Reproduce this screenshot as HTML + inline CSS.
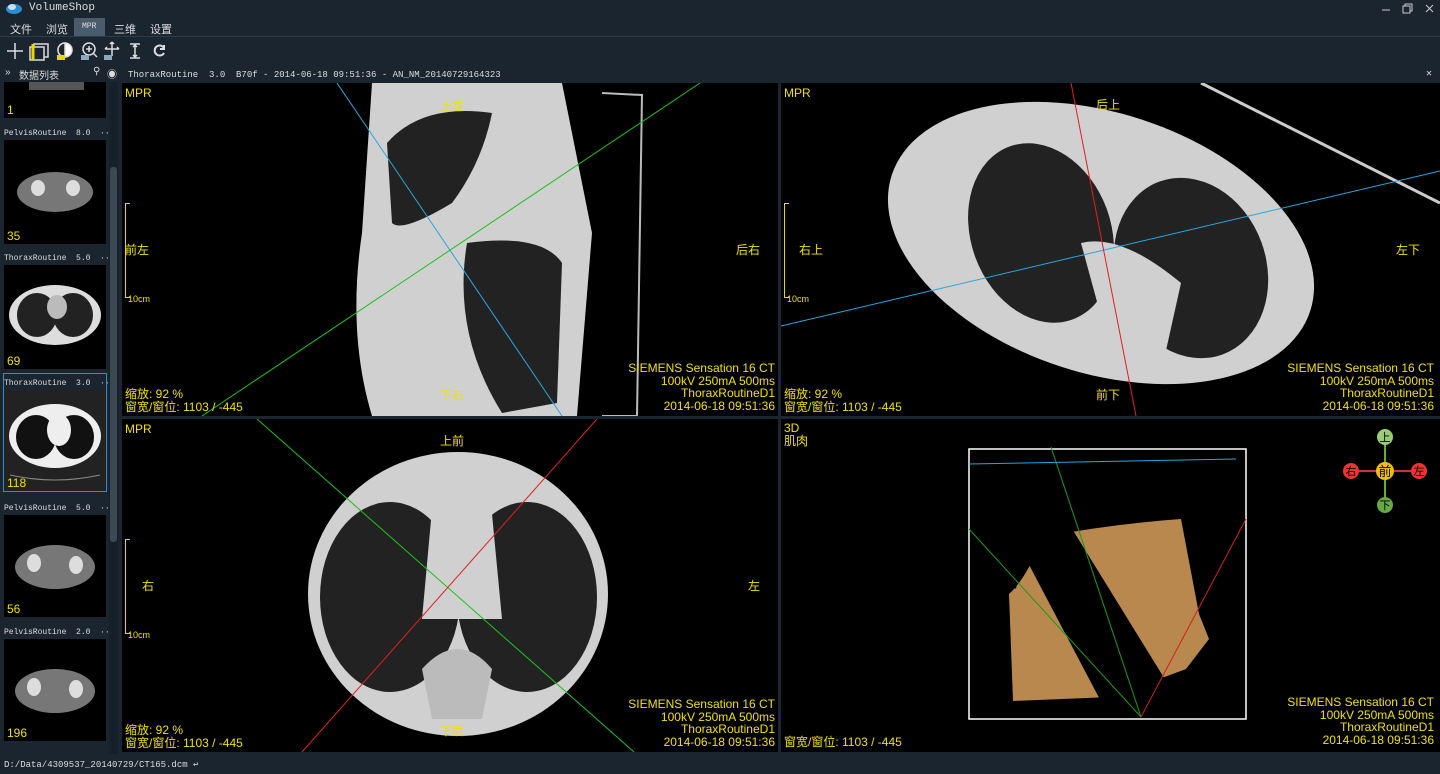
<!DOCTYPE html>
<html><head><meta charset="utf-8">
<style>
*{margin:0;padding:0;box-sizing:border-box}
body{width:1440px;height:774px;background:#1b2530;overflow:hidden;font-family:"Liberation Mono","Noto Sans CJK SC",monospace;color:#ddd;position:relative}
.abs{position:absolute}
.cn{font-family:"Liberation Sans","Noto Sans CJK SC",sans-serif}
.vp{position:absolute;background:#000;overflow:hidden}
.y{color:#f0e000;font-family:"Liberation Sans","Noto Sans CJK SC",sans-serif;font-size:12px;position:absolute;line-height:12.7px;white-space:nowrap}
.thumbh{position:absolute;left:4px;font-size:8px;color:#ddd;white-space:pre}
.th{position:absolute;left:4px;width:102px;background:#000}
.num{position:absolute;left:3px;bottom:1px;color:#f0e000;font-family:"Liberation Sans",sans-serif;font-size:12px}
</style></head><body>
<svg class="abs" style="left:4px;top:2px" width="20" height="13"><ellipse cx="10" cy="7" rx="8" ry="5" fill="#2a8fd0"/><ellipse cx="8" cy="5" rx="4" ry="3" fill="#cde"/></svg>
<div class="abs" style="left:29px;top:2px;font-size:11px;color:#ddd">VolumeShop</div>
<svg class="abs" style="left:1375px;top:2px" width="60" height="14" stroke="#ccc" fill="none"><path d="M7 8h8"/><rect x="28" y="4" width="7" height="7"/><path d="M30 4V2h7v7h-2"/><path d="M51 3l7 7M58 3l-7 7"/></svg>
<div class="abs cn" style="left:0;top:18px;width:1440px;height:18px;font-size:11px;color:#ddd">
<span class="abs" style="left:10px;top:3px">文件</span>
<span class="abs" style="left:46px;top:3px">浏览</span>
<span class="abs" style="left:74px;top:0;width:31px;height:18px;background:#4a5c6c"></span>
<span class="abs" style="left:82px;top:4px;font-size:8px;font-family:'Liberation Mono'">MPR</span>
<span class="abs" style="left:114px;top:3px">三维</span>
<span class="abs" style="left:150px;top:3px">设置</span>
</div>
<div class="abs" style="left:0;top:36px;width:1440px;height:1px;background:#2e3d4b"></div>
<svg class="abs" style="left:4px;top:40px" width="170" height="22" fill="none" stroke="#ddd" stroke-width="1.5">
<path d="M3 11H19M11 3V19"/>
<rect x="30" y="4" width="14" height="13" fill="#1b2530"/><rect x="26" y="7" width="14" height="13" fill="#1b2530"/><path d="M29 4v16" stroke="#e8d800" stroke-width="3"/>
<circle cx="61" cy="10" r="7" fill="#fff"/><path d="M61 3a7 7 0 0 0 0 14z" fill="#1b2530"/><rect x="53" y="15" width="8" height="5" fill="#e8d800" stroke="none"/>
<circle cx="85" cy="9" r="6"/><path d="M85 6v6M82 9h6M89 13l4 4"/><rect x="77" y="15" width="8" height="5" fill="#8ab" stroke="none"/>
<path d="M108 2v14M101 9h14M108 2l-2 2M108 2l2 2M101 9l2-2M115 9l-2-2"/><rect x="100" y="15" width="8" height="5" fill="#8ab" stroke="none"/>
<path d="M126 4h10M126 18h10M131 5v12M129 7l2-2 2 2M129 15l2 2 2-2"/>
<path d="M160 8a5 5 0 1 0 0 5M160 5v4h-4" stroke-width="2"/>
</svg>
<div class="abs cn" style="left:0;top:66px;width:120px;height:16px;font-size:10px;color:#ddd"><span class="abs" style="left:5px;top:1px">»</span><span class="abs" style="left:19px;top:1px">数据列表</span><span class="abs" style="left:93px;top:0">⚲</span><span class="abs" style="left:107px;top:0">◉</span></div>
<div class="abs" style="left:128px;top:70px;font-size:9px;color:#ddd;white-space:pre">ThoraxRoutine  3.0  B70f - 2014-06-18 09:51:36 - AN_NM_20140729164323</div>
<div class="abs" style="left:1426px;top:68px;font-size:10px;color:#ddd">✕</div>
<div class="abs" style="left:0;top:82px;width:120px;height:672px;background:#1b2530;overflow:hidden">
 <div class="th" style="top:0;height:36px"><div class="abs" style="left:25px;top:0;width:55px;height:8px;background:#555"></div><div class="num">1</div></div>
 <div class="thumbh" style="top:47px">PelvisRoutine  8.0  ···</div>
 <div class="th" style="top:58px;height:104px"><svg width="102" height="104"><ellipse cx="51" cy="52" rx="38" ry="20" fill="#777"/><ellipse cx="34" cy="48" rx="7" ry="8" fill="#ddd"/><ellipse cx="69" cy="48" rx="7" ry="8" fill="#ddd"/></svg><div class="num">35</div></div>
 <div class="thumbh" style="top:172px">ThoraxRoutine  5.0  ···</div>
 <div class="th" style="top:183px;height:104px"><svg width="102" height="104"><ellipse cx="51" cy="50" rx="46" ry="30" fill="#ddd"/><ellipse cx="33" cy="50" rx="20" ry="22" fill="#222"/><ellipse cx="69" cy="50" rx="20" ry="22" fill="#222"/><ellipse cx="53" cy="42" rx="10" ry="12" fill="#bbb"/></svg><div class="num">69</div></div>
 <div class="thumbh" style="top:297px">ThoraxRoutine  3.0  ···</div>
 <div class="th" style="top:291px;left:3px;width:104px;height:119px;border:1px solid #2a8fd0;background:transparent"></div>
 <div class="th" style="top:308px;height:101px;background:#222"><svg width="102" height="100"><ellipse cx="51" cy="46" rx="46" ry="32" fill="#eee"/><ellipse cx="32" cy="47" rx="20" ry="22" fill="#111"/><ellipse cx="70" cy="47" rx="20" ry="22" fill="#111"/><ellipse cx="55" cy="40" rx="12" ry="16" fill="#eee"/><path d="M6 85q45 10 90 0" stroke="#888" fill="none"/></svg><div class="num">118</div></div>
 <div class="thumbh" style="top:422px">PelvisRoutine  5.0  ···</div>
 <div class="th" style="top:433px;height:102px"><svg width="102" height="102"><ellipse cx="51" cy="52" rx="40" ry="22" fill="#777"/><ellipse cx="30" cy="48" rx="7" ry="9" fill="#ddd"/><ellipse cx="72" cy="50" rx="7" ry="9" fill="#ddd"/></svg><div class="num">56</div></div>
 <div class="thumbh" style="top:546px">PelvisRoutine  2.0  ···</div>
 <div class="th" style="top:557px;height:102px"><svg width="102" height="102"><ellipse cx="51" cy="52" rx="40" ry="22" fill="#777"/><ellipse cx="30" cy="48" rx="7" ry="9" fill="#ddd"/><ellipse cx="72" cy="50" rx="7" ry="9" fill="#ddd"/></svg><div class="num">196</div></div>
 <div class="abs" style="left:109px;top:0;width:9px;height:672px;background:#15202a"></div>
 <div class="abs" style="left:110px;top:85px;width:7px;height:375px;background:#3c4853;border-radius:3px"></div>
</div>
<div class="vp" style="left:122px;top:83px;width:656px;height:333px">
 <svg width="656" height="333" class="abs"><path d="M250 0L440 0 L470 150 L455 333 L250 333 Q225 250 240 150Z" fill="#d0d0d0"/><path d="M265 60Q300 20 370 30Q360 80 330 120Q280 150 270 140Z" fill="#222"/><path d="M345 160Q420 150 440 180L435 320L380 330Q330 250 345 160Z" fill="#222"/><path d="M480 10L520 12L515 333L480 333" fill="none" stroke="#bbb" stroke-width="2"/><path d="M215 0L440 333" stroke="#29a5e0"/><path d="M80 333L578 0" stroke="#1ec01e"/></svg>
 <div class="y" style="left:3px;top:4px">MPR</div><div class="y" style="left:318px;top:17px">上左</div><div class="y" style="left:3px;top:161px">前左</div><div class="y" style="left:614px;top:161px">后右</div><div class="y" style="left:318px;top:306px">下右</div>
 <div class="abs" style="left:3px;top:120px;width:5px;height:95px;border:1px solid #e8d800;border-right:none"></div><div class="y" style="left:6px;top:210px;font-size:9px">10cm</div>
 <div class="y" style="left:3px;top:305px">缩放: 92 %<br>窗宽/窗位: 1103 / -445</div>
 <div class="y" style="right:3px;top:279px;text-align:right">SIEMENS Sensation 16 CT<br>100kV 250mA 500ms<br>ThoraxRoutineD1<br>2014-06-18 09:51:36</div>
</div>
<div class="vp" style="left:781px;top:83px;width:659px;height:333px">
 <svg width="659" height="333" class="abs"><ellipse cx="320" cy="160" rx="220" ry="130" transform="rotate(18 320 160)" fill="#d0d0d0"/><ellipse cx="260" cy="150" rx="70" ry="92" fill="#222" transform="rotate(-20 260 150)"/><ellipse cx="410" cy="185" rx="75" ry="92" fill="#222" transform="rotate(-20 410 185)"/><path d="M300 160Q340 150 400 200L380 290L330 270Z" fill="#d0d0d0"/><path d="M420 0L659 120" stroke="#ccc" stroke-width="3" fill="none"/><path d="M0 243L659 88" stroke="#29a5e0"/><path d="M290 0L355 333" stroke="#e02020"/></svg>
 <div class="y" style="left:3px;top:4px">MPR</div><div class="y" style="left:315px;top:16px">后上</div><div class="y" style="left:18px;top:161px">右上</div><div class="y" style="left:615px;top:161px">左下</div><div class="y" style="left:315px;top:306px">前下</div>
 <div class="abs" style="left:3px;top:120px;width:5px;height:95px;border:1px solid #e8d800;border-right:none"></div><div class="y" style="left:6px;top:210px;font-size:9px">10cm</div>
 <div class="y" style="left:3px;top:305px">缩放: 92 %<br>窗宽/窗位: 1103 / -445</div>
 <div class="y" style="right:6px;top:279px;text-align:right">SIEMENS Sensation 16 CT<br>100kV 250mA 500ms<br>ThoraxRoutineD1<br>2014-06-18 09:51:36</div>
</div>
<div class="vp" style="left:122px;top:419px;width:656px;height:333px">
 <svg width="656" height="333" class="abs"><ellipse cx="336" cy="175" rx="150" ry="142" fill="#d0d0d0"/><ellipse cx="268" cy="178" rx="70" ry="95" fill="#222"/><ellipse cx="405" cy="178" rx="70" ry="95" fill="#222"/><path d="M310 90Q340 70 370 95L380 200L300 200Z" fill="#d0d0d0"/><path d="M300 250Q336 210 370 250L360 300L310 300Z" fill="#bbb"/><path d="M135 0L512 333" stroke="#1ec01e"/><path d="M180 333L475 0" stroke="#e02020"/></svg>
 <div class="y" style="left:3px;top:4px">MPR</div><div class="y" style="left:318px;top:16px">上前</div><div class="y" style="left:20px;top:161px">右</div><div class="y" style="left:626px;top:161px">左</div><div class="y" style="left:318px;top:306px">下后</div>
 <div class="abs" style="left:3px;top:120px;width:5px;height:95px;border:1px solid #e8d800;border-right:none"></div><div class="y" style="left:6px;top:210px;font-size:9px">10cm</div>
 <div class="y" style="left:3px;top:305px">缩放: 92 %<br>窗宽/窗位: 1103 / -445</div>
 <div class="y" style="right:3px;top:279px;text-align:right">SIEMENS Sensation 16 CT<br>100kV 250mA 500ms<br>ThoraxRoutineD1<br>2014-06-18 09:51:36</div>
</div>
<div class="vp" style="left:781px;top:419px;width:659px;height:333px">
 <svg width="659" height="333" class="abs">
  <path d="M228 175Q245 160 262 118Q330 105 400 100L418 195L428 220L405 250L330 278L232 282Z" fill="#b8884f"/>
  <path d="M245 105L285 100L385 262L365 292L325 292L245 140Z" fill="#000"/>
  <path d="M188 30L265 30L245 105L235 170L188 120Z" fill="#000"/>
  <path d="M188 30L465 30L465 300L188 300Z" fill="none" stroke="#fff" stroke-width="1.5"/>
  <path d="M188 110L360 298M270 28L360 298" stroke="#1a9a1a" fill="none"/>
  <path d="M465 100L360 298" stroke="#d02020"/>
  <path d="M188 45L455 40" stroke="#29a5e0"/>
  <g font-family="Noto Sans CJK SC" font-size="11" text-anchor="middle">
  <path d="M570 52H638" stroke="#c33" stroke-width="2"/><path d="M604 18V86" stroke="#6a4" stroke-width="2"/>
  <circle cx="604" cy="18" r="8" fill="#9c7"/><text x="604" y="22" fill="#000">上</text>
  <circle cx="604" cy="86" r="8" fill="#6a4"/><text x="604" y="90" fill="#000">下</text>
  <circle cx="570" cy="52" r="8" fill="#e33"/><text x="570" y="56" fill="#000">右</text>
  <circle cx="638" cy="52" r="8" fill="#e33"/><text x="638" y="56" fill="#000">左</text>
  <circle cx="604" cy="52" r="9" fill="#f0c000"/><text x="604" y="57" font-size="13" fill="#000">前</text></g>
 </svg>
 <div class="y" style="left:3px;top:3px">3D<br>肌肉</div>
 <div class="y" style="left:3px;top:317px">窗宽/窗位: 1103 / -445</div>
 <div class="y" style="right:6px;top:277px;text-align:right">SIEMENS Sensation 16 CT<br>100kV 250mA 500ms<br>ThoraxRoutineD1<br>2014-06-18 09:51:36</div>
</div>
<div class="abs" style="left:0;top:755px;width:1440px;height:19px;background:#1b2530;font-size:9px;color:#ddd;padding:5px 4px">D:/Data/4309537_20140729/CT165.dcm ↩</div>
</body></html>
